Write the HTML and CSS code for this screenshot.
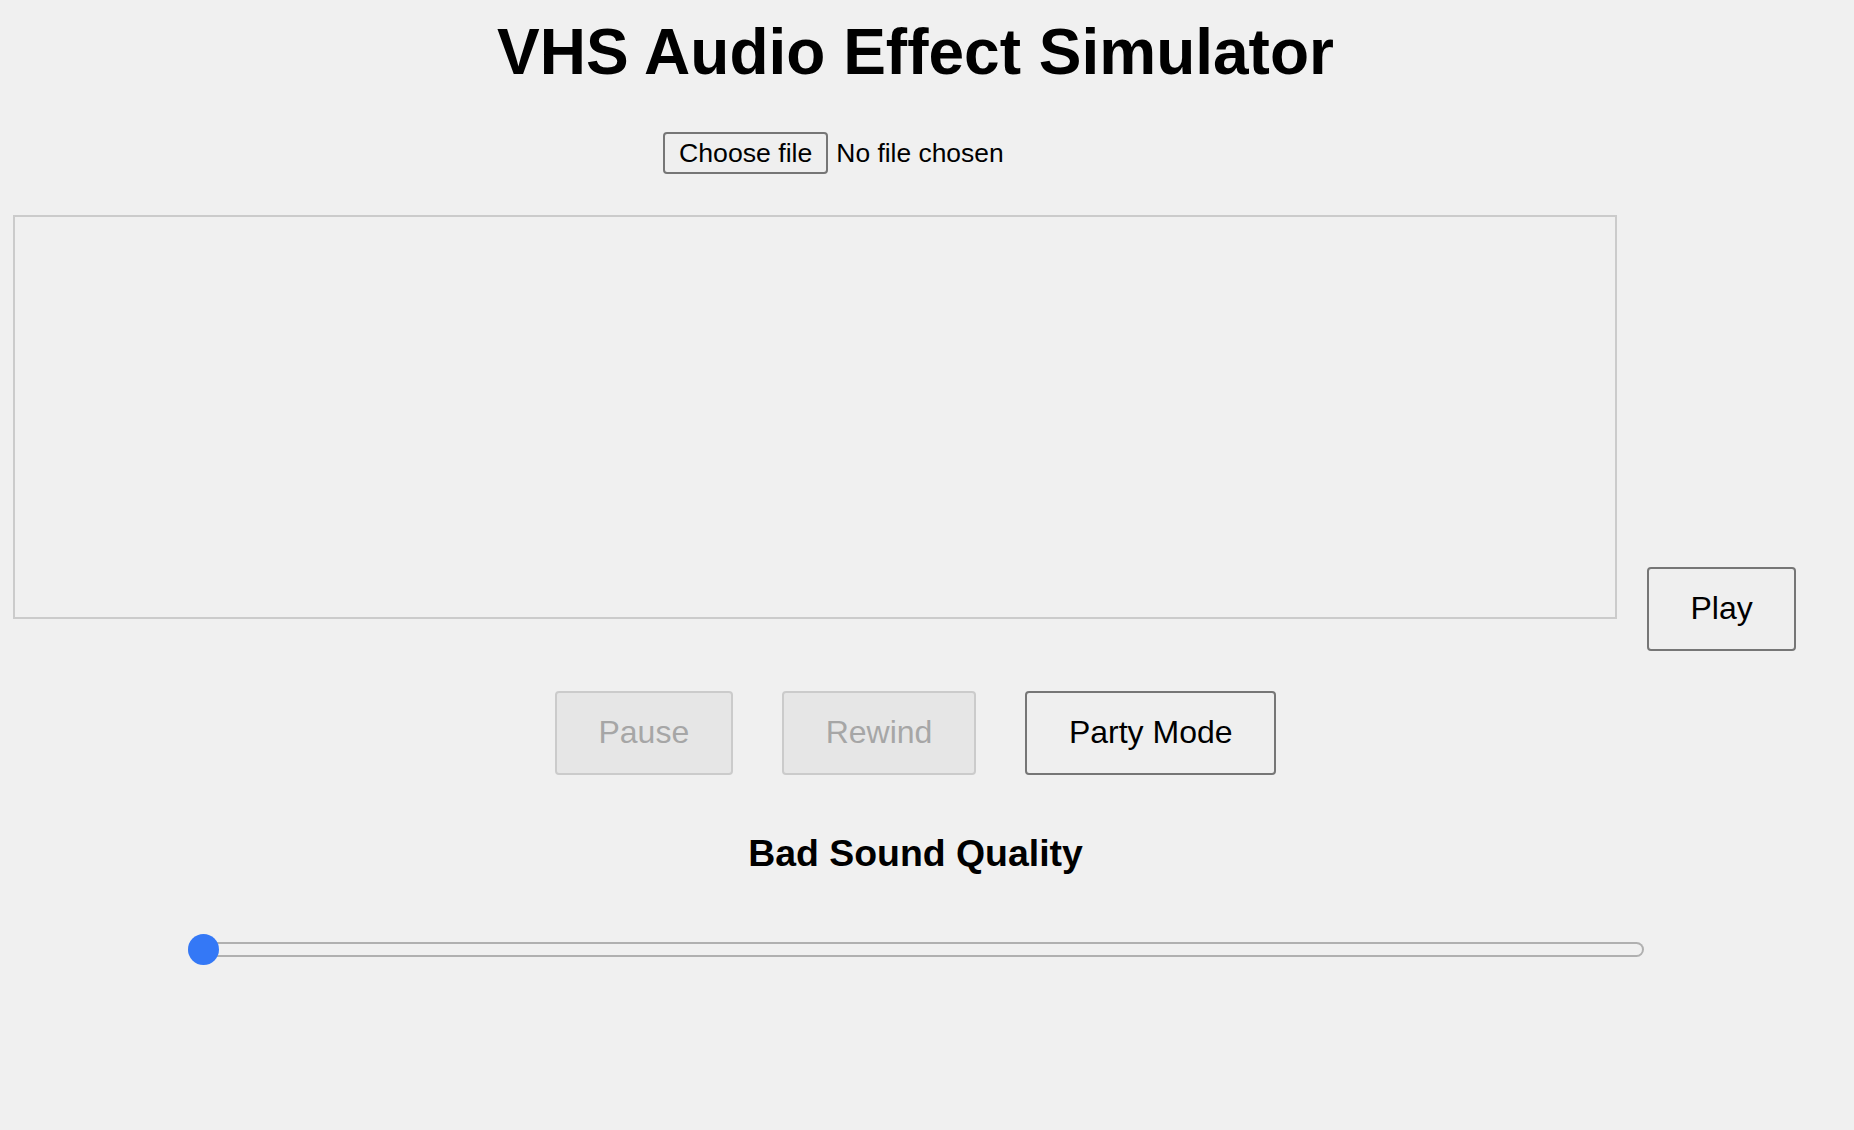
FILE: index.html
```html
<!DOCTYPE html>
<html lang="en">
<head>
<meta charset="utf-8">
<title>VHS Audio Effect Simulator</title>
<link rel="stylesheet" href="styles.css">
</head>
<body>
<main class="page">
  <h1 class="title">VHS Audio Effect Simulator</h1>
  <div class="file-row">
    <div class="file-picker">
      <button class="file-btn" type="button">Choose file</button>
      <span class="file-name">No file chosen</span>
    </div>
  </div>
  <div class="scope-row"><canvas class="scope" width="1600" height="400"></canvas><button class="btn play" type="button">Play</button></div>
  <div class="controls">
    <button class="btn" type="button" disabled>Pause</button>
    <button class="btn" type="button" disabled>Rewind</button>
    <button class="btn" type="button">Party Mode</button>
  </div>
  <h3 class="label">Bad Sound Quality</h3>
  <input class="quality" type="range" min="0" max="100" value="0">
</main>
</body>
</html>
```
FILE: styles.css
```css
html, body {
  margin: 0;
  padding: 0;
  background: #f0f0f0;
}

body {
  font-family: "Liberation Sans", Arial, Helvetica, sans-serif;
  color: #000;
}

.page {
  padding: 15px 36px 0 13px;
  text-align: center;
}

.title {
  margin: 0;
  font-size: 64px;
  line-height: 74px;
  font-weight: bold;
}

.file-row {
  margin-top: 43px;
  display: flex;
  justify-content: center;
}

.file-picker {
  width: 505px;
  height: 42px;
  display: flex;
  align-items: center;
  gap: 8px;
  font-size: 26.4px;
}

.file-btn {
  box-sizing: border-box;
  height: 42px;
  padding: 0 14px;
  font-family: inherit;
  font-size: 26.67px;
  color: #000;
  background: #efefef;
  border: 2px solid #767676;
  border-radius: 4px;
}

.file-name {
  white-space: nowrap;
}

.scope-row {
  margin-top: 41px;
  text-align: left;
  font-size: 0;
  line-height: 0;
  white-space: nowrap;
}

.scope {
  display: inline-block;
  width: 1600px;
  height: 400px;
  border: 2px solid #cbcbcb;
  vertical-align: baseline;
}

.btn {
  box-sizing: border-box;
  height: 84px;
  padding: 0 41.5px;
  font-family: "Liberation Sans", Arial, Helvetica, sans-serif;
  font-size: 32px;
  line-height: normal;
  color: #000;
  background: #efefef;
  border: 2px solid #767676;
  border-radius: 4px;
}

.btn:disabled {
  color: #a6a6a6;
  background: #e6e6e6;
  border-color: #cbcbcb;
}

.play {
  margin-left: 30px;
  vertical-align: baseline;
}

.controls {
  margin-top: 40px;
  display: flex;
  justify-content: center;
  gap: 49.5px;
}

.label {
  margin: 57px 0 0;
  font-size: 37.44px;
  line-height: 43px;
  font-weight: bold;
}

.quality {
  -webkit-appearance: none;
  appearance: none;
  display: block;
  width: 1456px;
  height: 31px;
  margin: 59px auto 0;
  padding: 0;
  background: transparent;
}

.quality::-webkit-slider-runnable-track {
  height: 15px;
  border: none;
  border-radius: 8px;
  background: transparent;
  box-shadow: inset 0 0 0 2px #b0b0b0;
}

.quality::-webkit-slider-thumb {
  -webkit-appearance: none;
  appearance: none;
  width: 31px;
  height: 31px;
  margin-top: -8px;
  border: none;
  border-radius: 50%;
  background: #3478f6;
}
```
